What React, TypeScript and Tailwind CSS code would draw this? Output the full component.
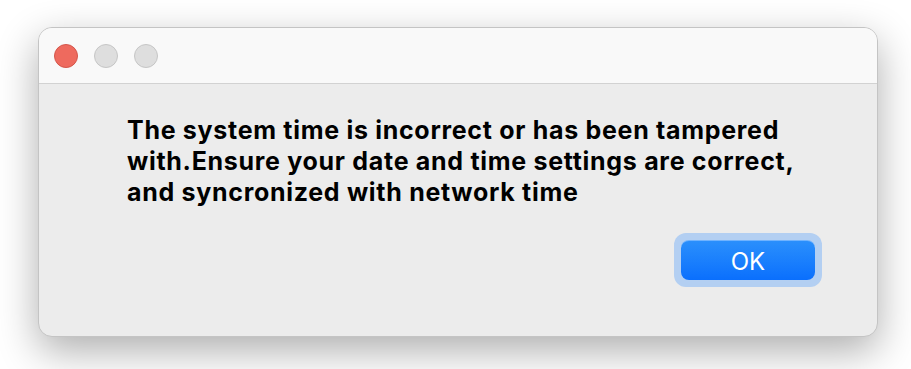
import React from 'react';

export default function App() {
  return (
    <div className="w-[911px] h-[369px] bg-white pt-[27px] pl-[38px] font-['Inter','Liberation_Sans',sans-serif] overflow-hidden">
      <div className="w-[840px] h-[310px] rounded-[14px] border border-[#c4c4c4] bg-[#ececec] overflow-hidden flex flex-col shadow-[0_14px_40px_rgba(0,0,0,0.32)]">
        {/* title bar */}
        <div className="h-[56px] shrink-0 bg-[#f9f9f9] border-b border-[#d2d2d2] flex items-center gap-4 pl-[15px]">
          <span className="w-6 h-6 rounded-full bg-[#ee6a5e] border border-[#d4564b]" />
          <span className="w-6 h-6 rounded-full bg-[#dedede] border border-[#c6c6c6]" />
          <span className="w-6 h-6 rounded-full bg-[#dedede] border border-[#c6c6c6]" />
        </div>

        {/* body */}
        <div className="flex-1 flex flex-col pl-[88px] pr-[55px] pt-[31px]">
          <p className="text-[25px] leading-[31px] font-bold text-black tracking-[0.7px] whitespace-nowrap">
            <span className="block">The system time is incorrect or has been tampered</span>
            <span className="block">with.Ensure your date and time settings are correct,</span>
            <span className="block">and syncronized with network time</span>
          </p>
          <div className="flex justify-end mt-[25px]">
            <div className="p-[7px] rounded-[12px] bg-[#b3cff2]">
              <button className="w-[134px] h-[40px] rounded-[8px] bg-gradient-to-b from-[#2a8ffc] to-[#0a6ffd] border-t border-[#6fb3ff] text-white text-[24px] leading-none pt-[2px]">
                OK
              </button>
            </div>
          </div>
        </div>
      </div>
    </div>
  );
}
